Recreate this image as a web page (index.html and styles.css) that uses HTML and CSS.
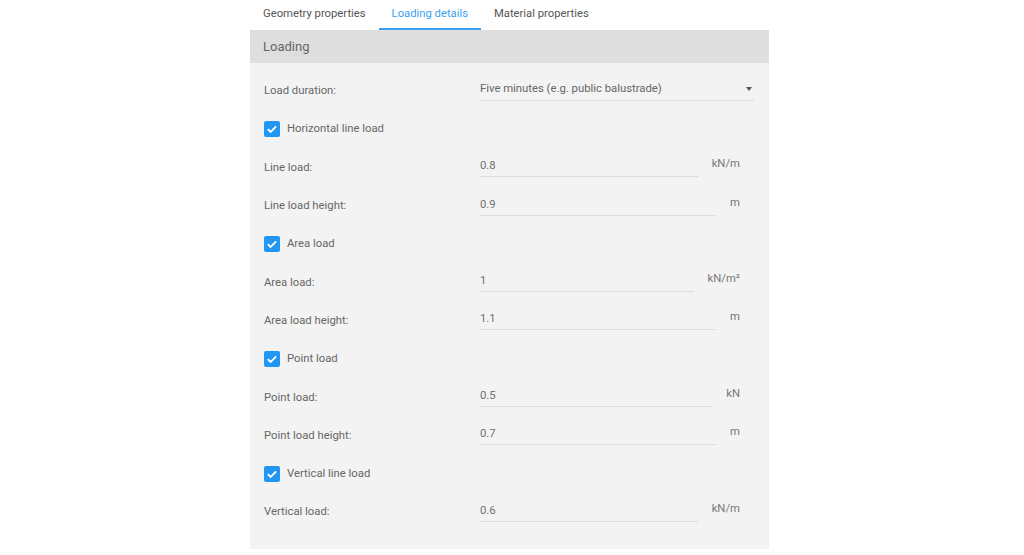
FILE: index.html
```html
<!DOCTYPE html>
<html>
<head>
<meta charset="utf-8">
<link rel="stylesheet" href="styles.css">
</head>
<body>
<div class="page">
  <div class="tabs">
    <div class="tab">Geometry properties</div>
    <div class="tab active">Loading details</div>
    <div class="tab">Material properties</div>
  </div>
  <div class="panel">
    <div class="panel-head">Loading</div>
    <div class="panel-body">
      <div class="row">
        <div class="label">Load duration:</div>
        <div class="select"><span>Five minutes (e.g. public balustrade)</span><span class="caret"></span></div>
      </div>
      <div class="row">
        <span class="check"><svg viewBox="0 0 16 16" width="16" height="16"><path d="M3.8 8.2 L6.6 11 L12.2 5.3" fill="none" stroke="#fff" stroke-width="1.8"/></svg></span>
        <span class="check-label">Horizontal line load</span>
      </div>
      <div class="row">
        <div class="label">Line load:</div>
        <div class="field">0.8</div>
        <div class="unit">kN/m</div>
      </div>
      <div class="row">
        <div class="label">Line load height:</div>
        <div class="field">0.9</div>
        <div class="unit">m</div>
      </div>
      <div class="row">
        <span class="check"><svg viewBox="0 0 16 16" width="16" height="16"><path d="M3.8 8.2 L6.6 11 L12.2 5.3" fill="none" stroke="#fff" stroke-width="1.8"/></svg></span>
        <span class="check-label">Area load</span>
      </div>
      <div class="row">
        <div class="label">Area load:</div>
        <div class="field">1</div>
        <div class="unit">kN/m²</div>
      </div>
      <div class="row">
        <div class="label">Area load height:</div>
        <div class="field">1.1</div>
        <div class="unit">m</div>
      </div>
      <div class="row">
        <span class="check"><svg viewBox="0 0 16 16" width="16" height="16"><path d="M3.8 8.2 L6.6 11 L12.2 5.3" fill="none" stroke="#fff" stroke-width="1.8"/></svg></span>
        <span class="check-label">Point load</span>
      </div>
      <div class="row">
        <div class="label">Point load:</div>
        <div class="field">0.5</div>
        <div class="unit">kN</div>
      </div>
      <div class="row">
        <div class="label">Point load height:</div>
        <div class="field">0.7</div>
        <div class="unit">m</div>
      </div>
      <div class="row">
        <span class="check"><svg viewBox="0 0 16 16" width="16" height="16"><path d="M3.8 8.2 L6.6 11 L12.2 5.3" fill="none" stroke="#fff" stroke-width="1.8"/></svg></span>
        <span class="check-label">Vertical line load</span>
      </div>
      <div class="row">
        <div class="label">Vertical load:</div>
        <div class="field">0.6</div>
        <div class="unit">kN/m</div>
      </div>
    </div>
  </div>
</div>
</body>
</html>
```

FILE: styles.css
```css
html, body {
  margin: 0;
  padding: 0;
  background: #fff;
}
body {
  font-family: Roboto, "Liberation Sans", Arial, sans-serif;
  color: #666;
}
.page {
  margin-left: 250px;
  width: 519px;
}
.tabs {
  display: flex;
  height: 30px;
}
.tab {
  padding: 0 13px;
  font-size: 11.25px;
  line-height: 28px;
  color: #555;
  box-sizing: border-box;
  height: 30px;
}
.tab.active {
  color: #3a9ff0;
  border-bottom: 2px solid #3a9ff0;
}
.panel-head {
  background: #dedede;
  height: 33px;
  line-height: 34px;
  padding-left: 13px;
  font-size: 13px;
  color: #666;
}
.panel-body {
  background: #f3f3f3;
  padding: 8px 15px 18px 14px;
}
.row {
  display: flex;
  align-items: center;
  height: 38.3px;
  font-size: 11.3px;
}
.label {
  width: 216px;
  flex: none;
  color: #666;
  padding-top: 1px;
}
.select {
  flex: 1;
  height: 21px;
  box-sizing: border-box;
  border-bottom: 1px solid #dcdcdc;
  display: flex;
  justify-content: space-between;
  align-items: center;
  line-height: 18px;
  color: #666;
  padding-bottom: 2px;
}
.caret {
  width: 0;
  height: 0;
  border-left: 3.5px solid transparent;
  border-right: 3.5px solid transparent;
  border-top: 4px solid #555;
  margin-right: 2px;
}
.field {
  flex: 1;
  height: 21px;
  box-sizing: border-box;
  border-bottom: 1px solid #dcdcdc;
  line-height: 19px;
  color: #707070;
}
.unit {
  padding: 0 14px;
  margin-bottom: 6px;
  color: #777;
}
.check {
  width: 16px;
  height: 16px;
  border-radius: 2px;
  background: #2196f3;
  display: flex;
  flex: none;
  margin-top: 1px;
}
.check-label {
  margin-left: 7px;
  color: #666;
  padding-top: 1px;
}
```
